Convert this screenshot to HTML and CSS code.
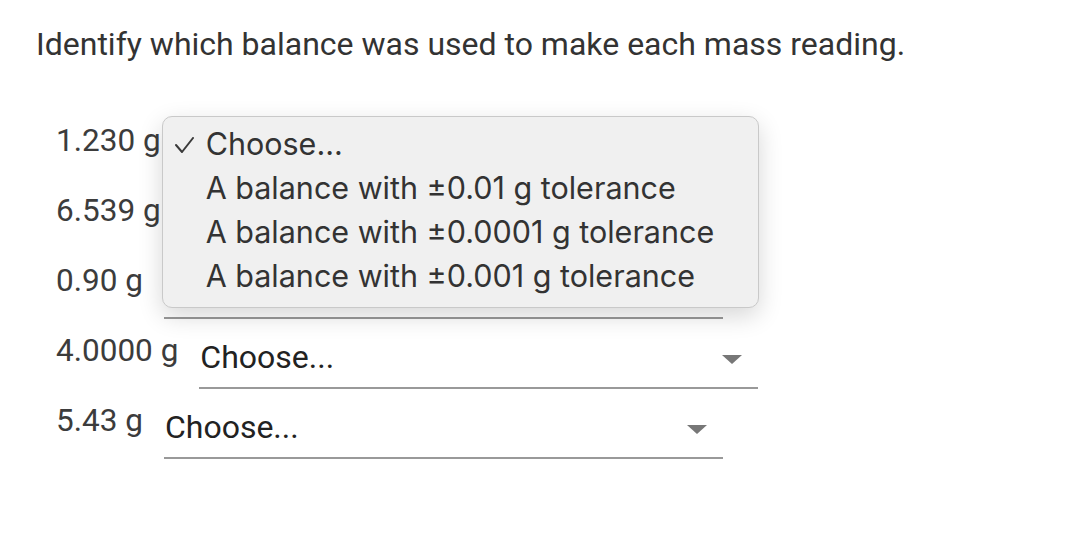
FILE: index.html
```html
<!DOCTYPE html>
<html lang="en">
<head>
  <meta charset="UTF-8" />
  <title>Balance readings</title>
  <link rel="stylesheet" href="styles.css">
</head>
<body>
  <div class="page">
    <p class="prompt">Identify which balance was used to make each mass reading.</p>

    <div class="rows">
      <div class="row">
        <span class="mass">1.230 g</span>
        <div class="select covered">
          <span class="value">Choose...</span>
          <span class="arrow"></span>

          <!-- open native dropdown -->
          <div class="popup">
            <div class="option checked">
              <svg class="check" width="19" height="16" viewBox="0 0 19 16">
                <polyline points="1,8 7,15 18,1" fill="none" stroke="#3a3a3a" stroke-width="2" stroke-linecap="round" stroke-linejoin="round" />
              </svg>
              Choose...
            </div>
            <div class="option">A balance with ±0.01 g tolerance</div>
            <div class="option">A balance with ±0.0001 g tolerance</div>
            <div class="option">A balance with ±0.001 g tolerance</div>
          </div>
        </div>
      </div>

      <div class="row">
        <span class="mass">6.539 g</span>
        <div class="select covered">
          <span class="value">Choose...</span>
          <span class="arrow"></span>
        </div>
      </div>

      <div class="row">
        <span class="mass">0.90 g</span>
        <div class="select covered">
          <span class="value">Choose...</span>
          <span class="arrow"></span>
        </div>
      </div>

      <div class="row">
        <span class="mass">4.0000 g</span>
        <div class="select">
          <span class="value">Choose...</span>
          <span class="arrow"></span>
        </div>
      </div>

      <div class="row">
        <span class="mass">5.43 g</span>
        <div class="select">
          <span class="value">Choose...</span>
          <span class="arrow"></span>
        </div>
      </div>
    </div>
  </div>
</body>
</html>
```

FILE: styles.css
```css
body {
  margin: 0;
  background: #fff;
  font-family: Roboto, "Liberation Sans", sans-serif;
  color: #333;
}
.page {
  padding: 20px 36px;
}
.prompt {
  margin: 0 0 59px;
  font-size: 32px;
  line-height: 48px;
  color: #333;
}
.rows {
  padding-left: 20px;
}
.row {
  display: flex;
  align-items: flex-start;
  gap: 21px;
  height: 52px;
  margin-bottom: 18px;
}
.mass {
  font-size: 31.5px;
  line-height: 1;
  margin-top: -2px;
  color: #3c3c3c;
}
.select {
  position: relative;
  width: 559px;
  height: 50px;
  border-bottom: 2px solid #999;
  display: flex;
  align-items: flex-start;
  justify-content: space-between;
}
.value {
  font-size: 32px;
  line-height: 32px;
  padding: 4px 0 0 1px;
  color: #222;
}
.arrow {
  width: 0;
  height: 0;
  border-left: 10px solid transparent;
  border-right: 10px solid transparent;
  border-top: 9px solid #777;
  margin: 18px 16px 0 0;
}
.covered .value,
.covered .arrow {
  visibility: hidden;
}
.popup {
  position: absolute;
  left: -20px;
  top: -11px;
  width: 595px;
  padding: 5px 0 9px;
  background: #f0f0f0;
  border: 1px solid #c9c9c9;
  border-radius: 10px;
  box-shadow: 0 8px 24px rgba(0, 0, 0, 0.16);
  font-family: Inter, "Noto Sans", sans-serif;
  z-index: 2;
}
.option {
  position: relative;
  height: 44px;
  line-height: 44px;
  padding-left: 43px;
  font-size: 30.5px;
  color: #333;
  white-space: nowrap;
}
.check {
  position: absolute;
  left: 12px;
  top: 15px;
}
```
